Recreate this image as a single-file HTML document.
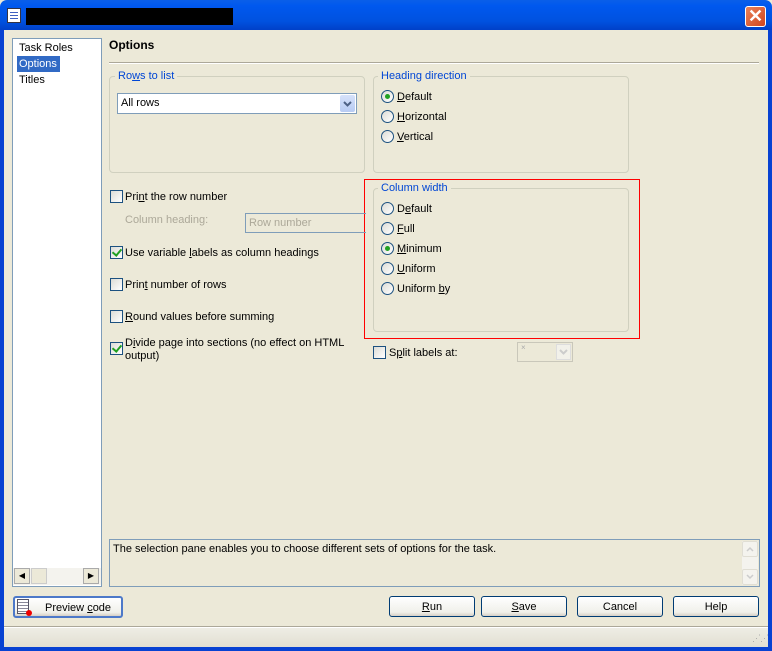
<!DOCTYPE html>
<html><head><style>
*{margin:0;padding:0;box-sizing:border-box}
body{width:772px;height:651px;overflow:hidden;background:#ECE9D8;font-family:"Liberation Sans",sans-serif;font-size:11px;color:#000;position:relative}
.a{position:absolute}
.grp{position:absolute;border:1px solid #D0D0BF;border-radius:4px}
.lg{position:absolute;background:#ECE9D8;color:#0046D5;padding:1px 3px 0;font-size:11px}
.rb{position:absolute;width:13px;height:13px;border-radius:50%;border:1px solid #1C5180;background:linear-gradient(135deg,#DCDCD6,#fff)}
.rb.on::after{content:"";position:absolute;left:3px;top:3px;width:5px;height:5px;border-radius:50%;background:#21A121}
.cb{position:absolute;width:13px;height:13px;border:1px solid #1C5180;background:linear-gradient(135deg,#DCDCD6,#fff)}
.cb.on::after{content:"";position:absolute;left:3px;top:0px;width:4px;height:7px;border:solid #21A121;border-width:0 2px 2px 0;transform:rotate(40deg)}
.t{position:absolute;white-space:nowrap;padding-top:1px}
.btn{position:absolute;height:21px;border:1px solid #003C74;border-radius:3px;background:linear-gradient(#fff,#F0F0EA 80%,#D6D0C5);text-align:center;line-height:20px}
u{text-decoration:underline}
</style></head><body>
<div class="a" style="left:0;top:0;width:772px;height:30px;background:linear-gradient(#0A5FE8,#0058EE 20%,#0052E0 70%,#0040C8);border-radius:7px 7px 0 0"></div>
<div class="a" style="left:7px;top:8px;width:14px;height:15px;background:#fff;border:1px solid #334"><div class="a" style="left:2px;top:3px;width:8px;height:9px;background:repeating-linear-gradient(#4060c0 0 1px,#fff 1px 3px)"></div></div>
<div class="a" style="left:26px;top:8px;width:207px;height:17px;background:#000"></div>
<div class="a" style="left:745px;top:6px;width:21px;height:21px;border:1px solid #fff;border-radius:3px;background:linear-gradient(135deg,#E8825A,#D3461E);color:#fff;font-size:18px;font-weight:bold;text-align:center;line-height:19px">✕</div>
<div class="a" style="left:0;top:30px;width:4px;height:621px;background:#0842D2"></div>
<div class="a" style="left:768px;top:30px;width:4px;height:621px;background:#0842D2"></div>
<div class="a" style="left:0;top:647px;width:772px;height:4px;background:#0842D2"></div>
<div class="a" style="left:12px;top:38px;width:90px;height:549px;background:#fff;border:1px solid #7F9DB9"></div>
<div class="t" style="left:19px;top:41px">Task Roles</div>
<div class="a" style="left:17px;top:56px;width:43px;height:16px;background:#316AC5"></div>
<div class="t" style="left:19px;top:57px;color:#fff">Options</div>
<div class="t" style="left:19px;top:73px">Titles</div>
<div class="a" style="left:13px;top:568px;width:88px;height:17px;background:#F4F3EE"></div>
<div class="a" style="left:14px;top:568px;width:16px;height:16px;background:#ECE9D8;border:1px solid #aaa;font-size:8px;text-align:center;line-height:14px">◀</div>
<div class="a" style="left:31px;top:568px;width:16px;height:16px;background:#ECE9D8;border:1px solid #ccc"></div>
<div class="a" style="left:83px;top:568px;width:16px;height:16px;background:#ECE9D8;border:1px solid #aaa;font-size:8px;text-align:center;line-height:14px">▶</div>
<div class="t" style="left:109px;top:37px;font-weight:bold;font-size:12px">Options</div>
<div class="a" style="left:109px;top:62px;width:650px;height:2px;border-top:1px solid #ACA899;border-bottom:1px solid #fff"></div>
<div class="grp" style="left:109px;top:76px;width:256px;height:97px"></div>
<div class="lg" style="left:115px;top:69px">Ro<u>w</u>s to list</div>
<div class="a" style="left:117px;top:93px;width:240px;height:21px;background:#fff;border:1px solid #7F9DB9"></div>
<div class="t" style="left:121px;top:96px">All rows</div>
<div class="a" style="left:340px;top:95px;width:15px;height:17px;background:linear-gradient(#D6E2FA,#B7CBF3);border-radius:2px"><svg width="15" height="17" style="position:absolute;left:0;top:0"><path d="M4 7l3.5 3.5L11 7" stroke="#4D6185" stroke-width="2" fill="none"/></svg></div>
<div class="grp" style="left:373px;top:76px;width:256px;height:97px"></div>
<div class="lg" style="left:378px;top:69px">Heading direction</div>
<div class="rb on" style="left:381px;top:90px"></div><div class="t" style="left:397px;top:90px"><u>D</u>efault</div>
<div class="rb" style="left:381px;top:110px"></div><div class="t" style="left:397px;top:110px"><u>H</u>orizontal</div>
<div class="rb" style="left:381px;top:130px"></div><div class="t" style="left:397px;top:130px"><u>V</u>ertical</div>
<div class="a" style="left:364px;top:179px;width:276px;height:160px;border:1px solid #F00"></div>
<div class="grp" style="left:373px;top:188px;width:256px;height:144px"></div>
<div class="lg" style="left:378px;top:181px">Column width</div>
<div class="rb" style="left:381px;top:202px"></div><div class="t" style="left:397px;top:202px">D<u>e</u>fault</div>
<div class="rb" style="left:381px;top:222px"></div><div class="t" style="left:397px;top:222px"><u>F</u>ull</div>
<div class="rb on" style="left:381px;top:242px"></div><div class="t" style="left:397px;top:242px"><u>M</u>inimum</div>
<div class="rb" style="left:381px;top:262px"></div><div class="t" style="left:397px;top:262px"><u>U</u>niform</div>
<div class="rb" style="left:381px;top:282px"></div><div class="t" style="left:397px;top:282px">Uniform <u>b</u>y</div>
<div class="cb" style="left:110px;top:190px"></div><div class="t" style="left:125px;top:190px">Pri<u>n</u>t the row number</div>
<div class="t" style="left:125px;top:213px;color:#ACA899">Column heading:</div>
<div class="a" style="left:245px;top:213px;width:121px;height:20px;border:1px solid #7F9DB9;border-right:none"></div>
<div class="t" style="left:249px;top:216px;color:#ACA899">Row number</div>
<div class="cb on" style="left:110px;top:246px"></div><div class="t" style="left:125px;top:246px">Use variable <u>l</u>abels as column headings</div>
<div class="cb" style="left:110px;top:278px"></div><div class="t" style="left:125px;top:278px">Prin<u>t</u> number of rows</div>
<div class="cb" style="left:110px;top:310px"></div><div class="t" style="left:125px;top:310px"><u>R</u>ound values before summing</div>
<div class="cb on" style="left:110px;top:342px"></div><div class="t" style="left:125px;top:336px;line-height:13px">D<u>i</u>vide page into sections (no effect on HTML<br>output)</div>
<div class="cb" style="left:373px;top:346px"></div><div class="t" style="left:389px;top:346px">S<u>p</u>lit labels at:</div>
<div class="a" style="left:517px;top:342px;width:56px;height:20px;border:1px solid #C9C7BA"></div>
<div class="t" style="left:521px;top:342px;color:#aaa;font-size:8px">×</div>
<div class="a" style="left:556px;top:344px;width:15px;height:16px;background:#F2F1EA;border:1px solid #ddd"><svg width="13" height="14" style="position:absolute;left:0;top:0"><path d="M3 5l3.5 3.5L10 5" stroke="#ccc" stroke-width="2" fill="none"/></svg></div>
<div class="a" style="left:109px;top:539px;width:651px;height:48px;border:1px solid #7F9DB9"></div>
<div class="t" style="left:113px;top:542px">The selection pane enables you to choose different sets of options for the task.</div>
<div class="a" style="left:742px;top:541px;width:16px;height:44px;background:#F4F3EE"></div>
<div class="a" style="left:742px;top:541px;width:16px;height:16px;border:1px solid #E0DED4;border-radius:2px"><svg width="14" height="14"><path d="M4 9l3-3 3 3" stroke="#ccc" stroke-width="1.5" fill="none"/></svg></div>
<div class="a" style="left:742px;top:569px;width:16px;height:16px;border:1px solid #E0DED4;border-radius:2px"><svg width="14" height="14"><path d="M4 5l3 3 3-3" stroke="#ccc" stroke-width="1.5" fill="none"/></svg></div>
<div class="btn" style="left:13px;top:596px;width:110px;height:22px;border:2px solid #4D79C9"><span style="position:absolute;left:30px;top:0">Preview <u>c</u>ode</span></div>
<div class="a" style="left:17px;top:599px;width:12px;height:15px;background:#fff;border:1px solid #556;background-image:repeating-linear-gradient(#fff 0 2px,#889 2px 3px)"></div>
<div class="a" style="left:26px;top:610px;width:6px;height:6px;border-radius:50%;background:#E00"></div>
<div class="btn" style="left:389px;top:596px;width:86px"><u>R</u>un</div>
<div class="btn" style="left:481px;top:596px;width:86px"><u>S</u>ave</div>
<div class="btn" style="left:577px;top:596px;width:86px">Cancel</div>
<div class="btn" style="left:673px;top:596px;width:86px">Help</div>
<div class="a" style="left:4px;top:626px;width:764px;height:2px;border-top:1px solid #ACA899;border-bottom:1px solid #fff"></div>
<div class="a" style="left:4px;top:628px;width:764px;height:19px;background:linear-gradient(#EEEDE5,#E2DFD2)"></div>
<div class="t" style="left:752px;top:632px;color:#aaa;font-size:9px;letter-spacing:-1px">⋰⋰</div>
</body></html>
